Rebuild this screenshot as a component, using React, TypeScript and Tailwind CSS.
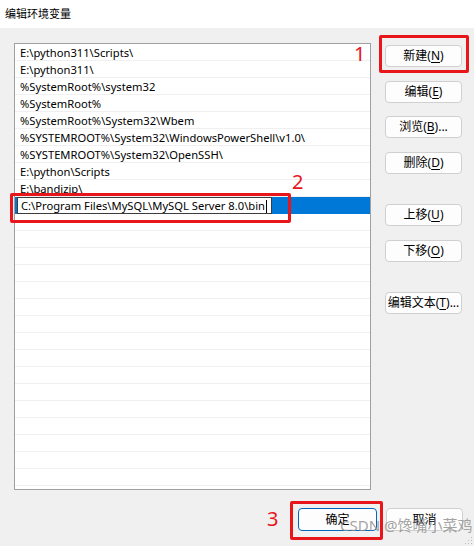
import React from 'react';

const paths = [
    'E:\\python311\\Scripts\\',
    'E:\\python311\\',
    '%SystemRoot%\\system32',
    '%SystemRoot%',
    '%SystemRoot%\\System32\\Wbem',
    '%SYSTEMROOT%\\System32\\WindowsPowerShell\\v1.0\\',
    '%SYSTEMROOT%\\System32\\OpenSSH\\',
    'E:\\python\\Scripts',
    'E:\\bandizip\\',
];

const EMPTY_ROWS = 17;

function SideButton({ label, hotkey, suffix = '', className = '' }: { label: string; hotkey: string; suffix?: string; className?: string }) {
    return (
        <button className={`w-[77px] h-[22px] bg-[#fdfdfd] border border-[#d0d0d0] rounded-[4px] text-[12px] text-black leading-none flex items-center justify-center ${className}`}>
            {label}(<span className="underline underline-offset-2">{hotkey}</span>){suffix}
        </button>
    );
}

export default function App() {
    return (
        <div
            className="relative w-[474px] h-[546px] bg-[#f0f0f0] flex flex-col overflow-hidden"
            style={{ fontFamily: '"Noto Sans", "Noto Sans CJK SC", sans-serif' }}
        >
            {/* title bar */}
            <div className="h-[28px] bg-white flex items-center pl-[5px] text-[11px] text-black">编辑环境变量</div>

            <div className="flex pl-[14px] pt-[15px]">
                {/* path list */}
                <div className="w-[357px] h-[447px] bg-white border border-[#a0a0a0] overflow-hidden flex flex-col">
                    {paths.map(p => (
                        <div key={p} className="h-[17px] shrink-0 border-b border-[#f0f0f0] pl-[5px] pt-[2px] text-[11.2px] leading-[14px] text-black whitespace-nowrap">
                            {p}
                        </div>
                    ))}
                    <div className="h-[17px] shrink-0 bg-[#0078d7] pl-[2px] flex items-center">
                        <div className="w-[255px] h-[17px] bg-white border border-[#3c3c3c] pl-[3px] pt-[1px] text-[11.2px] leading-[14px] text-black whitespace-nowrap flex items-center">
                            C:\Program Files\MySQL\MySQL Server 8.0\bin
                            <span className="inline-block w-px h-[13px] bg-black ml-[1px]" />
                        </div>
                    </div>
                    {Array.from({ length: EMPTY_ROWS }).map((_, i) => (
                        <div key={i} className="h-[17px] shrink-0 border-b border-[#f0f0f0]" />
                    ))}
                </div>

                {/* action buttons */}
                <div className="ml-[14px] pt-[2px] flex flex-col">
                    <SideButton label="新建" hotkey="N" />
                    <SideButton label="编辑" hotkey="E" className="mt-[14px]" />
                    <SideButton label="浏览" hotkey="B" suffix="..." className="mt-[13px]" />
                    <SideButton label="删除" hotkey="D" className="mt-[14px]" />
                    <SideButton label="上移" hotkey="U" className="mt-[30px]" />
                    <SideButton label="下移" hotkey="O" className="mt-[14px]" />
                    <SideButton label="编辑文本" hotkey="T" suffix="..." className="mt-[30px]" />
                </div>
            </div>

            {/* bottom buttons */}
            <div className="flex justify-end gap-[9px] pr-[11px] mt-[18px]">
                <button className="w-[79px] h-[23px] bg-[#fdfdfd] border border-[#0067c0] rounded-[4px] text-[12px] text-black">确定</button>
                <button className="w-[77px] h-[23px] bg-[#fdfdfd] border border-[#d0d0d0] rounded-[4px] text-[12px] text-black">取消</button>
            </div>

            {/* annotations */}
            <div className="absolute left-[379px] top-[35px] w-[90px] h-[38px] border-[3px] border-[#e8161b] rounded-[2px]" />
            <div className="absolute left-[354px] top-[44px] text-[20px] leading-none text-[#e8161b]">1</div>
            <div className="absolute left-[10px] top-[193px] w-[281px] h-[30px] border-[3px] border-[#e8161b] rounded-[2px]" />
            <div className="absolute left-[292px] top-[172px] text-[20px] leading-none text-[#e8161b]">2</div>
            <div className="absolute left-[290px] top-[501px] w-[93px] h-[39px] border-[3px] border-[#e8161b] rounded-[2px]" />
            <div className="absolute left-[267px] top-[509px] text-[20px] leading-none text-[#e8161b]">3</div>

            {/* watermark */}
            <div className="absolute left-[340px] top-[518px] text-[15px] leading-none text-[#8c8c8c]/80 whitespace-nowrap">CSDN @馋嘴小菜鸡</div>

            {/* resize grip */}
            <svg className="absolute right-[1px] bottom-[2px]" width="8" height="8" viewBox="0 0 8 8">
                <rect x="6" y="1" width="1" height="1" fill="#bbb" />
                <rect x="3" y="4" width="1" height="1" fill="#bbb" />
                <rect x="6" y="4" width="1" height="1" fill="#bbb" />
                <rect x="0" y="7" width="1" height="1" fill="#bbb" />
                <rect x="3" y="7" width="1" height="1" fill="#bbb" />
                <rect x="6" y="7" width="1" height="1" fill="#bbb" />
            </svg>
        </div>
    );
}
